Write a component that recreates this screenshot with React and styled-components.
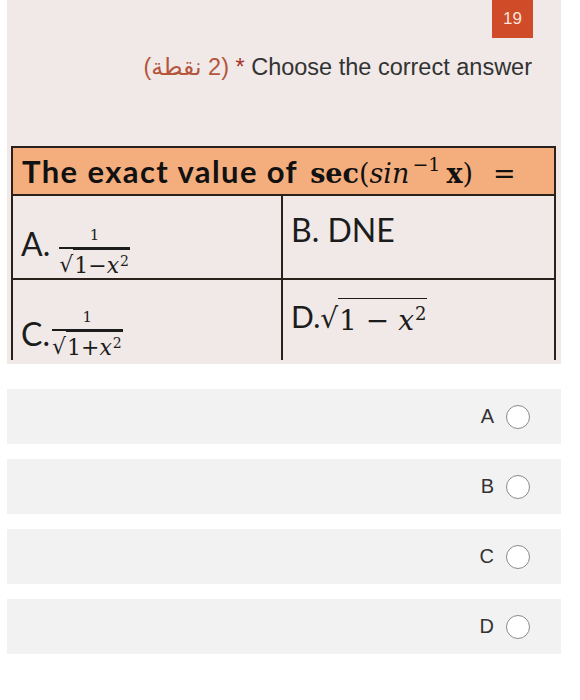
import React from 'react';
import styled, { createGlobalStyle } from 'styled-components';

const GlobalStyle = createGlobalStyle`
  body {
    margin: 0;
    background: #ffffff;
    font-family: "Liberation Sans", Arial, sans-serif;
  }
`;

const Page = styled.div`
  width: 554px;
  margin-left: 7px;
`;

const QuestionCard = styled.div`
  background: #f0e9e8;
  padding: 0 5px 4px 4px;
`;

const TopBar = styled.div`
  display: flex;
  justify-content: flex-end;
  padding-right: 23px;
`;

const Badge = styled.div`
  width: 41px;
  height: 38px;
  background: #d04b27;
  color: #fbe5dc;
  font-size: 17px;
  display: flex;
  align-items: center;
  justify-content: center;
`;

const Title = styled.div`
  margin-top: 16px;
  padding-right: 24px;
  text-align: right;
  font-size: 23.5px;
  line-height: 27px;
  color: #333333;
`;

const Points = styled.bdi`
  color: #b4553c;
  font-family: "Liberation Sans", "DejaVu Sans", sans-serif;
`;

const Star = styled.span`
  color: #a8352a;
`;

const MathTable = styled.div`
  margin-top: 65px;
  width: 545px;
  border: 2px solid #2a211c;
  border-bottom: none;
  box-sizing: border-box;
`;

const HeaderCell = styled.div`
  height: 48px;
  box-sizing: border-box;
  background: #f4ae7e;
  border-bottom: 2px solid #2a211c;
  padding-left: 9px;
  line-height: 46px;
  font-family: "Lato", sans-serif;
  font-weight: 700;
  font-size: 31px;
  letter-spacing: 1.4px;
  color: #111111;
  white-space: nowrap;
`;

const Serif = styled.span`
  font-family: "DejaVu Serif", "Liberation Serif", serif;
  font-weight: ${p => (p.$bold ? 700 : 400)};
  font-style: ${p => (p.$italic ? 'italic' : 'normal')};
  font-size: ${p => p.$size || 27}px;
  letter-spacing: 0;
  margin-left: ${p => p.$ml || 0}px;
`;

const Sup = styled.span`
  font-family: "DejaVu Serif", "Liberation Serif", serif;
  font-weight: 400;
  font-size: 19px;
  letter-spacing: 0;
  vertical-align: 12px;
  line-height: 0;
  margin: 0 6px 0 3px;
`;

const Grid = styled.div`
  display: grid;
  grid-template-columns: 270px 1fr;
`;

const Cell = styled.div`
  box-sizing: border-box;
  height: ${p => p.$h}px;
  padding: ${p => p.$pt}px 8px 0 8px;
  border-right: ${p => (p.$divider ? '2px solid #2a211c' : 'none')};
  border-bottom: ${p => (p.$lined ? '2px solid #2a211c' : 'none')};
  font-family: "Lato", sans-serif;
  font-size: ${p => p.$fs || 32}px;
  color: #1c1c1c;
  white-space: nowrap;
  overflow: hidden;
`;

const Frac = styled.span`
  display: inline-flex;
  flex-direction: column;
  align-items: center;
  vertical-align: ${p => p.$raise}px;
  font-family: "DejaVu Serif", "Liberation Serif", serif;
  margin-left: ${p => p.$ml || 2}px;
`;

const Numer = styled.span`
  font-size: 15px;
  line-height: 18px;
  width: 100%;
  text-align: center;
  border-bottom: 2px solid #1c1c1c;
  padding-bottom: 3px;
`;

const Denom = styled.span`
  font-size: 22px;
  line-height: 22px;
  display: inline-flex;
  align-items: flex-end;
`;

const Radicand = styled.span`
  border-top: 1.5px solid #1c1c1c;
  padding: 1px 1px 0 1px;
  line-height: ${p => p.$lh || 20}px;
`;

const Sq = styled.span`
  font-size: ${p => p.$size || 14}px;
  vertical-align: ${p => p.$raise || 7}px;
  margin-left: 1px;
`;

const Inline = styled.span`
  font-family: "DejaVu Serif", "Liberation Serif", serif;
  font-size: 28px;
  display: inline-flex;
  align-items: flex-end;
`;

const Options = styled.div`
  margin-top: 25px;
  display: flex;
  flex-direction: column;
  gap: 15px;
`;

const OptionRow = styled.label`
  height: 55px;
  background: #f2f2f2;
  display: flex;
  align-items: center;
  justify-content: flex-end;
  gap: 12px;
  padding-right: 31px;
  font-size: 20px;
  color: #333333;
`;

const Radio = styled.span`
  width: 24px;
  height: 24px;
  box-sizing: border-box;
  border-radius: 50%;
  border: 1.5px solid #8a8a8a;
  background: #ffffff;
`;

const choices = ['A', 'B', 'C', 'D'];

export default function App() {
  return (
    <>
      <GlobalStyle />
      <Page>
        <QuestionCard>
          <TopBar>
            <Badge>19</Badge>
          </TopBar>
          <Title>
            <Points dir="rtl">(2 نقطة)</Points> <Star>*</Star> Choose the correct answer
          </Title>
          <MathTable>
            <HeaderCell>
              The exact value of
              <Serif $bold $ml={12}>sec</Serif>
              <Serif>(</Serif>
              <Serif $italic>sin</Serif>
              <Sup>−1</Sup>
              <Serif $bold>x</Serif>
              <Serif>)</Serif>
              <Serif $ml={20}>=</Serif>
            </HeaderCell>
            <Grid>
              <Cell $h={84} $pt={28} $divider $lined>
                A.
                <Frac $raise={16} $ml={9}>
                  <Numer>1</Numer>
                  <Denom>
                    √<Radicand>1−<i>x</i><Sq>2</Sq></Radicand>
                  </Denom>
                </Frac>
              </Cell>
              <Cell $h={84} $pt={14} $lined>
                B. DNE
              </Cell>
              <Cell $h={80} $pt={28} $divider>
                C.
                <Frac $raise={24}>
                  <Numer>1</Numer>
                  <Denom>
                    √<Radicand>1+<i>x</i><Sq>2</Sq></Radicand>
                  </Denom>
                </Frac>
              </Cell>
              <Cell $h={80} $pt={18} $fs={30}>
                D.
                <Inline>
                  √<Radicand $lh={28}>1 − <i>x</i><Sq $size={18} $raise={10}>2</Sq></Radicand>
                </Inline>
              </Cell>
            </Grid>
          </MathTable>
        </QuestionCard>
        <Options>
          {choices.map(c => (
            <OptionRow key={c}>
              {c}
              <Radio />
            </OptionRow>
          ))}
        </Options>
      </Page>
    </>
  );
}
